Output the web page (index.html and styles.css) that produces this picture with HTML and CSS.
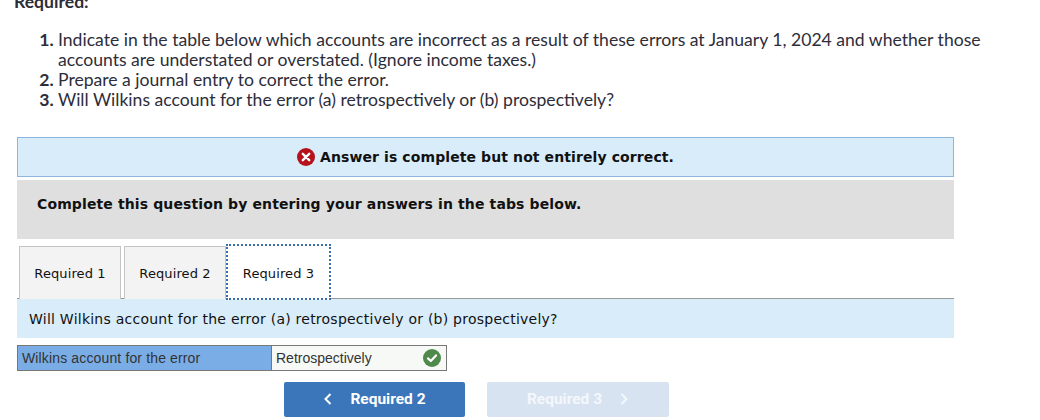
FILE: index.html
```html
<!DOCTYPE html>
<html lang="en">
<head>
    <meta charset="UTF-8">
    <title>Required 3</title>
    <link rel="stylesheet" href="styles.css">
</head>
<body>
    <div class="question">
        <p class="required-title">Required:</p>
        <ol class="steps">
            <li>Indicate in the table below which accounts are incorrect as a result of these errors at January 1, 2024 and whether those accounts are understated or overstated. (Ignore income taxes.)</li>
            <li>Prepare a journal entry to correct the error.</li>
            <li>Will Wilkins account for the error (a) retrospectively or (b) prospectively?</li>
        </ol>
    </div>

    <div class="result-banner">
        <svg class="status-icon" viewBox="0 0 18 18" width="18" height="18">
            <circle cx="9" cy="9" r="9" fill="#b5121b"/>
            <path d="M5.8 5.8l6.4 6.4M12.2 5.8l-6.4 6.4" stroke="#fff" stroke-width="2.4" stroke-linecap="round"/>
        </svg>
        <span>Answer is complete but not entirely correct.</span>
    </div>

    <div class="instructions">Complete this question by entering your answers in the tabs below.</div>

    <div class="tabs">
        <div class="tab">Required 1</div>
        <div class="tab">Required 2</div>
        <div class="tab tab-active">Required 3</div>
    </div>

    <div class="tab-prompt">Will Wilkins account for the error (a) retrospectively or (b) prospectively?</div>

    <div class="answer-row">
        <div class="answer-label">Wilkins account for the error</div>
        <div class="answer-value">
            <span>Retrospectively</span>
            <svg class="status-icon" viewBox="0 0 18 18" width="18" height="18">
                <circle cx="9" cy="9" r="9" fill="#4f8a4c"/>
                <path d="M5 9.4l2.8 2.6L13 6.4" fill="none" stroke="#fff" stroke-width="2.2" stroke-linecap="round" stroke-linejoin="round"/>
            </svg>
        </div>
    </div>

    <div class="nav-buttons">
        <button class="nav-button">
            <svg class="chevron" viewBox="0 0 10 14" width="10" height="14"><path d="M7.5 2L2.5 7l5 5" fill="none" stroke="currentColor" stroke-width="2"/></svg>
            Required 2
        </button>
        <button class="nav-button nav-disabled">
            Required 3
            <svg class="chevron" viewBox="0 0 10 14" width="10" height="14"><path d="M2.5 2l5 5-5 5" fill="none" stroke="currentColor" stroke-width="2"/></svg>
        </button>
    </div>
</body>
</html>
```

FILE: styles.css
```css
/* Global Styles */
body {
    margin: 0;
    height: 420px;
    overflow: hidden;
    background-color: #fff;
    font-family: "DejaVu Sans", Verdana, sans-serif;
    color: #111;
}

/* Question text */
.question {
    margin-top: -8px;
    padding-left: 14px;
    font-family: Lato, "Open Sans", sans-serif;
    font-size: 17.58px;
    line-height: 20px;
    color: #2d2d3a;
}

.required-title {
    margin: 0 0 18px;
    font-weight: 700;
}

.steps {
    margin: 0;
    padding-left: 44px;
    width: 930px;
}

.steps li::marker {
    font-weight: 700;
}

/* Banners */
.result-banner {
    display: flex;
    align-items: center;
    justify-content: center;
    gap: 5px;
    box-sizing: border-box;
    width: 937px;
    height: 40px;
    margin: 27px 0 0 17px;
    background-color: #d9ecfa;
    border: 1px solid #8fb5dc;
    font-size: 14px;
    font-weight: 700;
    letter-spacing: 0.1px;
}

.instructions {
    box-sizing: border-box;
    width: 937px;
    height: 59px;
    margin: 3px 0 0 17px;
    padding: 14px 20px;
    background-color: #dfdfdf;
    font-size: 14px;
    font-weight: 700;
    line-height: 20px;
    letter-spacing: 0.12px;
}

/* Tabs */
.tabs {
    display: flex;
    gap: 3px;
    box-sizing: border-box;
    width: 937px;
    height: 60px;
    margin-left: 17px;
    padding: 7px 0 0 2px;
    border-bottom: 1px solid #999;
}

.tab {
    display: flex;
    align-items: center;
    justify-content: center;
    box-sizing: border-box;
    width: 102px;
    height: 53px;
    background-color: #f3f3f3;
    border: 1px solid #c4c4c4;
    border-bottom: none;
    font-size: 13px;
    letter-spacing: 0.1px;
}

.tab-active {
    width: 105px;
    height: 56px;
    margin: -2px 0 0 -3px;
    padding-top: 2px;
    background-color: #fff;
    border: 2px dotted #3a6ea8;
}

.tab-prompt {
    box-sizing: border-box;
    width: 937px;
    height: 39px;
    margin-left: 17px;
    padding: 0 12px;
    background-color: #d9ecfa;
    font-size: 14px;
    line-height: 41px;
    letter-spacing: 0.24px;
}

/* Answer table */
.answer-row {
    display: flex;
    box-sizing: border-box;
    width: 430px;
    height: 26px;
    margin: 7px 0 0 17px;
    border: 1px solid #777;
    font-family: "Liberation Sans", Arial, sans-serif;
    font-size: 14px;
    line-height: 24px;
    color: #333;
}

.answer-label {
    box-sizing: border-box;
    width: 254px;
    padding-left: 4px;
    background-color: #7aade6;
    border-right: 1px solid #777;
    letter-spacing: 0.14px;
}

.answer-value {
    display: flex;
    align-items: center;
    justify-content: space-between;
    flex: 1;
    padding: 0 5px 0 4px;
    background-color: #f6f9f5;
}

.status-icon {
    flex: none;
}

/* Prev / next buttons */
.nav-buttons {
    display: flex;
    gap: 22px;
    margin: 11px 0 0 284px;
}

.nav-button {
    display: flex;
    align-items: center;
    justify-content: center;
    gap: 17px;
    width: 181px;
    height: 35px;
    padding: 0 0 2px;
    background-color: #3b76bb;
    border: none;
    border-radius: 2px;
    color: #fff;
    font-family: Roboto, "Liberation Sans", sans-serif;
    font-size: 15.5px;
    font-weight: 700;
}

.nav-disabled {
    width: 182px;
    background-color: #d8e3f1;
    color: #f4f7fb;
}
```
